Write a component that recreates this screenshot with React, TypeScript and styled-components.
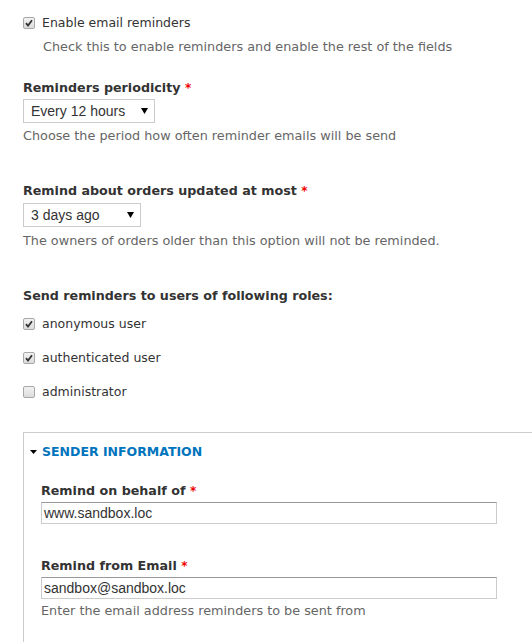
import React from "react";
import styled, { createGlobalStyle } from "styled-components";

const Global = createGlobalStyle`
  html, body { margin: 0; padding: 0; background: #fff; }
  body {
    font-family: "DejaVu Sans", "Lucida Sans Unicode", sans-serif;
    color: #333;
    font-size: 13px;
    overflow: hidden;
  }
`;

const Page = styled.div`
  padding: 14px 0 0 23px;
`;

const Item = styled.div<{ $mt?: number }>`
  margin-top: ${(p) => p.$mt ?? 0}px;
`;

const CheckRow = styled.label<{ $mt?: number }>`
  display: flex;
  align-items: center;
  gap: 7px;
  height: 18px;
  line-height: 18px;
  font-size: 12.5px;
  color: #333;
  margin-top: ${(p) => p.$mt ?? 0}px;
`;

const Box = styled.span`
  width: 12px;
  height: 12px;
  box-sizing: border-box;
  border: 1px solid #a8a8a8;
  border-radius: 2px;
  background: linear-gradient(#f2f2f2, #dcdcdc);
  display: flex;
  align-items: center;
  justify-content: center;
  flex: none;
`;

const Label = styled.div<{ $mt?: number }>`
  font-weight: bold;
  font-size: 12.7px;
  line-height: 18px;
  color: #333;
  margin-top: ${(p) => p.$mt ?? 0}px;
`;

const Req = styled.span`
  color: #e00;
  font-size: 12px;
`;

const Desc = styled.div<{ $mt?: number; $indent?: number }>`
  font-size: 12.8px;
  line-height: 18px;
  color: #666;
  margin-top: ${(p) => p.$mt ?? 0}px;
  padding-left: ${(p) => p.$indent ?? 0}px;
`;

const SelectBox = styled.div<{ $w: number; $mt?: number }>`
  width: ${(p) => p.$w}px;
  height: 24px;
  box-sizing: border-box;
  border: 1px solid #ccc;
  display: flex;
  align-items: center;
  justify-content: space-between;
  padding: 0 6px 0 7px;
  font-family: "Liberation Sans", Arial, sans-serif;
  font-size: 14px;
  color: #333;
  margin-top: ${(p) => p.$mt ?? 0}px;
`;

const Fieldset = styled.div`
  margin-top: 31px;
  border-top: 1px solid #ccc;
  border-left: 1px solid #ccc;
  padding: 10px 0 30px 6px;
`;

const Legend = styled.div`
  display: flex;
  align-items: center;
  gap: 5px;
  font-weight: bold;
  font-size: 12.5px;
  line-height: 18px;
  color: #0074bd;
  text-transform: uppercase;
`;

const FieldsetBody = styled.div`
  padding-left: 11px;
`;

const TextInput = styled.div<{ $mt?: number }>`
  width: 456px;
  height: 22px;
  box-sizing: border-box;
  border: 1px solid #ccc;
  border-top-color: #999;
  display: flex;
  align-items: center;
  padding-left: 2px;
  font-family: "Liberation Sans", Arial, sans-serif;
  font-size: 14px;
  color: #333;
  margin-top: ${(p) => p.$mt ?? 0}px;
`;

const Check = () => (
  <svg width="8" height="8" viewBox="0 0 8 8">
    <path d="M1 4.2 L3 6.5 L7 1.2" fill="none" stroke="#333" strokeWidth="1.8" />
  </svg>
);

const Checkbox = ({ checked, children, mt }: { checked?: boolean; children: React.ReactNode; mt?: number }) => (
  <CheckRow $mt={mt}>
    <Box>{checked && <Check />}</Box>
    {children}
  </CheckRow>
);

const Arrow = () => (
  <svg width="7" height="6" viewBox="0 0 7 6">
    <path d="M0 0 H7 L3.5 6 Z" fill="#000" />
  </svg>
);

const Caret = () => (
  <svg width="7" height="4" viewBox="0 0 7 4">
    <path d="M0 0 H7 L3.5 4 Z" fill="#000" />
  </svg>
);

export default function App() {
  return (
    <>
      <Global />
      <Page>
        <Checkbox checked>Enable email reminders</Checkbox>
        <Desc $mt={6} $indent={20}>
          Check this to enable reminders and enable the rest of the fields
        </Desc>

        <Label $mt={23}>
          Reminders periodicity <Req>*</Req>
        </Label>
        <SelectBox $w={132} $mt={2}>
          <span>Every 12 hours</span>
          <Arrow />
        </SelectBox>
        <Desc $mt={4}>Choose the period how often reminder emails will be send</Desc>

        <Label $mt={37}>
          Remind about orders updated at most <Req>*</Req>
        </Label>
        <SelectBox $w={118} $mt={3}>
          <span>3 days ago</span>
          <Arrow />
        </SelectBox>
        <Desc $mt={5}>The owners of orders older than this option will not be reminded.</Desc>

        <Label $mt={37}>Send reminders to users of following roles:</Label>
        <Item $mt={10}>
          <Checkbox checked>anonymous user</Checkbox>
          <Checkbox checked mt={16}>authenticated user</Checkbox>
          <Checkbox mt={16}>administrator</Checkbox>
        </Item>

        <Fieldset>
          <Legend>
            <Caret />
            Sender information
          </Legend>
          <FieldsetBody>
            <Label $mt={21}>
              Remind on behalf of <Req>*</Req>
            </Label>
            <TextInput $mt={2}>www.sandbox.loc</TextInput>
            <Label $mt={33}>
              Remind from Email <Req>*</Req>
            </Label>
            <TextInput $mt={2}>sandbox@sandbox.loc</TextInput>
            <Desc $mt={3}>Enter the email address reminders to be sent from</Desc>
          </FieldsetBody>
        </Fieldset>
      </Page>
    </>
  );
}
